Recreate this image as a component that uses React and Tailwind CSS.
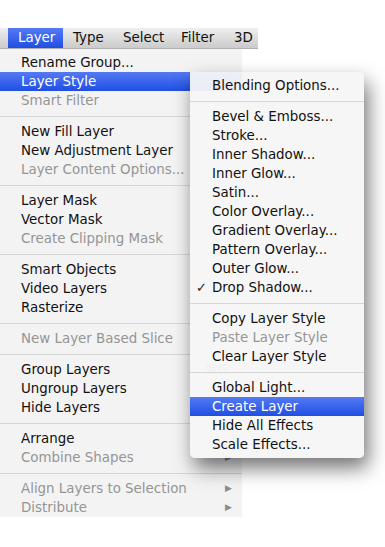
import React from "react";

const font = { fontFamily: '"DejaVu Sans", "Liberation Sans", sans-serif' };

// arrows that sit under the submenu are left out, they are hidden anyway
const mainItems = [
  { label: "Rename Group..." },
  { label: "Layer Style", active: true },
  { label: "Smart Filter", disabled: true },
  "sep",
  { label: "New Fill Layer" },
  { label: "New Adjustment Layer" },
  { label: "Layer Content Options...", disabled: true },
  "sep",
  { label: "Layer Mask" },
  { label: "Vector Mask" },
  { label: "Create Clipping Mask", disabled: true },
  "sep",
  { label: "Smart Objects" },
  { label: "Video Layers" },
  { label: "Rasterize" },
  "sep",
  { label: "New Layer Based Slice", disabled: true },
  "sep",
  { label: "Group Layers", shortcut: "⌘G" },
  { label: "Ungroup Layers" },
  { label: "Hide Layers" },
  "sep",
  { label: "Arrange" },
  { label: "Combine Shapes", disabled: true, arrow: true },
  "sep",
  { label: "Align Layers to Selection", disabled: true, arrow: true },
  { label: "Distribute", disabled: true, arrow: true },
];

const subItems = [
  { label: "Blending Options..." },
  "sep",
  { label: "Bevel & Emboss..." },
  { label: "Stroke..." },
  { label: "Inner Shadow..." },
  { label: "Inner Glow..." },
  { label: "Satin..." },
  { label: "Color Overlay..." },
  { label: "Gradient Overlay..." },
  { label: "Pattern Overlay..." },
  { label: "Outer Glow..." },
  { label: "Drop Shadow...", checked: true },
  "sep",
  { label: "Copy Layer Style" },
  { label: "Paste Layer Style", disabled: true },
  { label: "Clear Layer Style" },
  "sep",
  { label: "Global Light..." },
  { label: "Create Layer", active: true },
  { label: "Hide All Effects" },
  { label: "Scale Effects..." },
];

const Separator = () => (
  <div className="h-[12px] flex items-center">
    <div className="h-px w-full bg-[#d6d6d6]" />
  </div>
);

const Row = ({ item, sub }) => {
  const color = item.active
    ? "text-white bg-gradient-to-b from-[#5479f3] to-[#1f4ee2]"
    : item.disabled
    ? "text-[#959595]"
    : "text-[#111]";
  return (
    <div className={`h-[19px] flex items-center leading-[19px] pr-[10px] ${color}`}>
      <span className={`${sub ? "w-[22px] pl-[6px]" : "w-[21px]"} shrink-0 text-[13px] text-[#222]`}>
        {item.checked ? "✓" : ""}
      </span>
      <span className="flex-1">{item.label}</span>
      {item.shortcut && <span className="pr-[4px] text-[#9a9a9a]">{item.shortcut}</span>}
      {item.arrow && <span className="text-[9px] text-[#8c8c8c]">▶</span>}
    </div>
  );
};

const App = () => {
  const bar = [
    { label: "Layer", w: "w-[55px]", active: true },
    { label: "Type", w: "w-[50px]" },
    { label: "Select", w: "w-[58px]" },
    { label: "Filter", w: "w-[53px]" },
    { label: "3D", w: "w-[34px]" },
  ];

  return (
    <div className="relative w-[385px] h-[547px] bg-white overflow-hidden text-[13.4px]" style={font}>
      <div className="pt-[28px]">
        <div className="w-[258px] h-[21px] flex pl-[8px] bg-gradient-to-b from-[#efefef] to-[#cbcbcb] border-b border-[#b0b0b0]">
          {bar.map((b) => (
            <div
              key={b.label}
              className={`${b.w} h-full flex items-center pl-[10px] ${
                b.active
                  ? "text-white bg-gradient-to-b from-[#5479f3] to-[#1f4ee2]"
                  : "text-[#111]"
              }`}
            >
              {b.label}
            </div>
          ))}
        </div>

        <div className="w-[242px] bg-[#f3f3f3] pt-[4px]">
          {mainItems.map((item, i) =>
            item === "sep" ? <Separator key={i} /> : <Row key={i} item={item} />
          )}
        </div>
      </div>

      {/* Layer Style submenu, opened over the main menu */}
      <div className="absolute left-[190px] top-[72px] w-[174px] py-[4px] bg-[#f5f5f5]/95 rounded-tr-[5px] rounded-b-[5px] shadow-[4px_10px_20px_rgba(0,0,0,0.55)] overflow-hidden">
        {subItems.map((item, i) =>
          item === "sep" ? <Separator key={i} /> : <Row key={i} item={item} sub />
        )}
      </div>
    </div>
  );
};

export default App;
